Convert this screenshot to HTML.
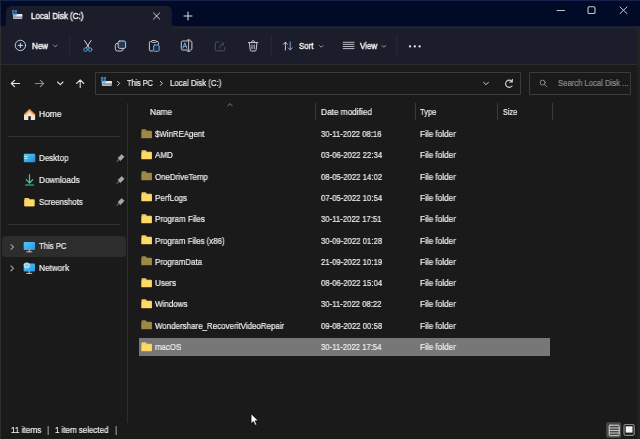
<!DOCTYPE html>
<html><head><meta charset="utf-8">
<style>
*{box-sizing:border-box;margin:0;padding:0}
html,body{width:640px;height:439px;overflow:hidden;background:#1a1a1a;font-family:"Liberation Sans",sans-serif;color:#fff}
.a{position:absolute}
.t{position:absolute;white-space:nowrap;transform-origin:0 0;will-change:transform;-webkit-text-stroke:0.2px currentColor;font-size:8.5px;line-height:12px;color:#f0f0f0}
svg{position:absolute;overflow:visible}
.fh{opacity:.58}
</style></head><body>
<svg width="0" height="0" style="position:absolute"><defs>
<symbol id="fold" viewBox="0 0 11 9" preserveAspectRatio="none"><path d="M0.5 1 Q0.5 0.3 1.2 0.3 H4.6 L5.8 1.6 H10 Q10.6 1.6 10.6 2.2 V8.2 Q10.6 8.8 10 8.8 H1.1 Q0.5 8.8 0.5 8.2 Z" fill="#f2cf63"/><path d="M0.5 2.4 H10.6 V8.2 Q10.6 8.8 10 8.8 H1.1 Q0.5 8.8 0.5 8.2 Z" fill="#ffd865"/></symbol>
<symbol id="drive" viewBox="0 0 10.6 8.9" preserveAspectRatio="none">
<rect x="1.1" y="4" width="9.5" height="4.9" rx="0.8" fill="#b6bac2"/>
<path d="M1.1 4.8 Q1.1 4 1.9 4 H9.8 Q10.6 4 10.6 4.8 V6.6 H1.1Z" fill="#e6eaf0"/>
<rect x="1.1" y="4" width="3.4" height="2.6" fill="#8ec0e6"/>
<rect x="1.6" y="6.6" width="8.6" height="0.7" fill="#5c626e"/>
<rect x="0" y="0" width="2.3" height="2.1" fill="#3d7fba"/><rect x="2.7" y="0" width="2.3" height="2.1" fill="#3d7fba"/>
<rect x="0" y="2.4" width="2.3" height="2.1" fill="#3d7fba"/><rect x="2.7" y="2.4" width="2.3" height="2.1" fill="#3d7fba"/>
</symbol>
</defs></svg>
<!-- title bar -->
<div class="a" style="left:0;top:0;width:640px;height:26px;background:#010a26"></div>
<div class="a" style="left:0;top:0;width:640px;height:1px;background:#17224a"></div>
<div class="a" style="left:0;top:0;width:1px;height:26px;background:#1a2238"></div>
<div class="a" style="left:5.5px;top:6px;width:166px;height:21px;background:#1b1e2a;border-radius:6px 6px 0 0"></div>
<!-- toolbar -->
<div class="a" style="left:0;top:26px;width:640px;height:38px;background:#1b1e2a"></div>
<div class="a" style="left:172px;top:27px;width:468px;height:2px;background:#1f2231"></div>
<div class="a" style="left:0;top:64px;width:640px;height:1px;background:#2b2d33"></div>
<!-- nav -->
<div class="a" style="left:95px;top:72px;width:426px;height:23px;border:1px solid #3b3b3b;border-radius:1px"></div>
<div class="a" style="left:529px;top:72px;width:102px;height:23px;border:1px solid #3b3b3b;border-radius:1px"></div>
<!-- sidebar -->
<div class="a" style="left:127px;top:103px;width:1px;height:320px;background:#2e2e2e"></div>
<div class="a" style="left:8px;top:136px;width:112px;height:1px;background:#333"></div>
<div class="a" style="left:8px;top:224px;width:112px;height:1px;background:#333"></div>
<div class="a" style="left:2px;top:236px;width:124px;height:21px;background:#2d2d2d;border-radius:3px"></div>
<!-- header separators -->
<div class="a" style="left:315px;top:103px;width:1px;height:17px;background:#3a3a3a"></div>
<div class="a" style="left:415px;top:103px;width:1px;height:17px;background:#3a3a3a"></div>
<div class="a" style="left:497px;top:103px;width:1px;height:17px;background:#3a3a3a"></div>
<div class="a" style="left:552px;top:103px;width:1px;height:17px;background:#3a3a3a"></div>
<div class="a" style="left:0;top:26px;width:1px;height:413px;background:#2e2e2e"></div>
<div class="a" style="left:637px;top:26px;width:3px;height:413px;background:#222"></div>
<!-- selection -->
<div class="a" style="left:139px;top:338px;width:411px;height:18px;background:#777"></div>
<svg class="a" style="left:0;top:0" width="640" height="439" viewBox="0 0 640 439">
<g fill="none" stroke-linecap="round" stroke-linejoin="round">
<use href="#drive" x="11.9" y="10.1" width="10.6" height="8.9"/>
<rect x="171.5" y="21.5" width="4.5" height="5" fill="#1b1e2a" stroke="none"/>
<path d="M171.5 18 V22.5 A3.5 3.5 0 0 0 175 26 H176.5 V18 Z" fill="#010a26" stroke="none"/>
<!-- tab close -->
<path d="M153.6 13 L159.6 19 M159.6 13 L153.6 19" stroke="#d8d8d8" stroke-width="1"/>
<!-- plus -->
<path d="M188 12 V20 M184 16 H192" stroke="#e0e0e0" stroke-width="1"/>
<!-- window controls -->
<path d="M557 10.5 H564.5" stroke="#c8c8c8" stroke-width="1"/>
<rect x="588" y="6.7" width="7" height="6.8" rx="1.3" stroke="#c8c8c8" stroke-width="1.1"/>
<path d="M620 7 L627 13.5 M627 7 L620 13.5" stroke="#c8c8c8" stroke-width="1"/>
<!-- toolbar: new -->
<circle cx="20.4" cy="45.4" r="5.2" fill="#17243a" stroke="#c8ccd4" stroke-width="1"/>
<path d="M20.4 43.3 V47.5 M18.3 45.4 H22.5" stroke="#d8dbe2" stroke-width="1"/>
<path d="M53.5 45 L55.3 46.8 L57.1 45" stroke="#a0a4ac" stroke-width="0.9"/>
<!-- separators -->
<path d="M69.7 36 V55 M271.3 35 V56 M396.7 35 V56" stroke="#282b36" stroke-width="1"/>
<!-- scissors -->
<path d="M84.6 40.5 L89.4 48.1 M91 40.5 L86.3 48.1" stroke="#d0d4da" stroke-width="1"/>
<circle cx="85.6" cy="49.6" r="1.8" stroke="#5aa8e0" stroke-width="0.9"/>
<circle cx="90.2" cy="49.6" r="1.8" stroke="#5aa8e0" stroke-width="0.9"/>
<!-- copy -->
<rect x="118.2" y="41" width="7.4" height="7.4" rx="1.5" fill="#22395a" stroke="#c8ccd4" stroke-width="1"/>
<path d="M117.6 43.2 Q115.3 43.2 115.3 45.5 V48.8 Q115.3 51 117.6 51 H121 Q123.3 51 123.3 48.8" stroke="#c8ccd4" stroke-width="1"/>
<!-- paste -->
<path d="M151.5 41.5 H150.5 Q149.4 41.5 149.4 42.7 V49.8 Q149.4 51 150.6 51 H152.8 M156.3 41.5 H157.2 Q158.4 41.5 158.4 42.7 V44.5" stroke="#c8ccd4" stroke-width="1"/>
<rect x="151.6" y="40.5" width="4.7" height="2" rx="0.8" stroke="#c8ccd4" stroke-width="0.9"/>
<rect x="153.6" y="45" width="5.6" height="6.3" rx="1" fill="#1e3048" stroke="#6aaae0" stroke-width="1"/>
<!-- rename -->
<path d="M187.2 41 H182.6 Q181.3 41 181.3 42.3 V48.7 Q181.3 50 182.6 50 H187.2 M190 41 H190.6 Q191.9 41 191.9 42.3 V48.7 Q191.9 50 190.6 50 H190" stroke="#c8ccd4" stroke-width="1"/>
<path d="M188.6 40 V51.2 M187.3 40 H190 M187.3 51.2 H190" stroke="#c8ccd4" stroke-width="0.9"/>
<path d="M182.9 48.2 L184.9 42.8 L186.9 48.2 M183.7 46.4 H186.1" stroke="#6bb0e8" stroke-width="1"/>
<!-- share (disabled) -->
<path d="M219 42 H216.5 Q215.3 42 215.3 43.2 V49.6 Q215.3 50.8 216.5 50.8 H223.5 Q224.7 50.8 224.7 49.6 V47.5" stroke="#4a505c" stroke-width="1"/>
<path d="M219.5 48 Q219.5 44 223.5 44 M221.8 42 L224 44 L221.8 46" stroke="#3a4d66" stroke-width="1"/>
<!-- trash -->
<path d="M248.4 42.6 H257.8 M251.4 42.4 Q251.6 40.6 253.1 40.6 Q254.6 40.6 254.8 42.4 M249.4 43 L250.2 50 Q250.3 51 251.3 51 H255 Q256 51 256.1 50 L256.9 43 M252 45 V48.6 M254.2 45 V48.6" stroke="#c8ccd4" stroke-width="1"/>
<!-- sort -->
<path d="M285.4 50 V42.3 M283.4 44.3 L285.4 42.2 L287.4 44.3" stroke="#d8dbe2" stroke-width="0.9"/>
<path d="M290.2 42 V49.8 M288.2 47.8 L290.2 49.9 L292.2 47.8" stroke="#8cb8dc" stroke-width="0.9"/>
<path d="M319.5 45.5 L321.3 47.3 L323.1 45.5" stroke="#a0a4ac" stroke-width="0.9"/>
<!-- view -->
<path d="M343.2 42.3 H354 M343.2 44.4 H354 M343.2 46.5 H354 M343.2 48.6 H354" stroke="#c8ccd4" stroke-width="0.9"/>
<path d="M382 45.5 L383.8 47.3 L385.6 45.5" stroke="#a0a4ac" stroke-width="0.9"/>
<!-- more -->
<circle cx="410" cy="46.4" r="1.15" fill="#eeeeee"/><circle cx="414.8" cy="46.4" r="1.15" fill="#eeeeee"/><circle cx="419.6" cy="46.4" r="1.15" fill="#eeeeee"/>
<!-- nav arrows -->
<path d="M19.5 83.5 H11.3 M14.6 80.3 L11.3 83.5 L14.6 86.7" stroke="#e8e8e8" stroke-width="1.1"/>
<path d="M35.4 83.5 H43.6 M40.3 80.3 L43.6 83.5 L40.3 86.7" stroke="#8a8a8a" stroke-width="1.1"/>
<path d="M57.6 82 L60.3 84.7 L63 82" stroke="#e0e0e0" stroke-width="1.1"/>
<path d="M80.2 87.5 V80 M76.6 83.5 L80.2 79.9 L83.8 83.5" stroke="#e0e0e0" stroke-width="1.1"/>
<use href="#drive" x="100.7" y="76.8" width="11.2" height="9.2"/>
<path d="M117.6 81.4 L119.6 83.4 L117.6 85.4 M160.4 81.4 L162.4 83.4 L160.4 85.4" stroke="#d8d8d8" stroke-width="1"/>
<path d="M483.6 82.3 L486 84.7 L488.4 82.3" stroke="#d0d0d0" stroke-width="1"/>
<path d="M512 81.5 A3.6 3.6 0 1 0 512 86 M512.3 79.3 V82 H509.6" stroke="#d8d8d8" stroke-width="1.1"/>
<circle cx="542.6" cy="82.6" r="2.5" stroke="#8a8a8a" stroke-width="1"/>
<path d="M544.4 84.4 L546.6 86.6" stroke="#8a8a8a" stroke-width="1"/>
<!-- header caret -->
<path d="M227.8 105.8 L230 103.6 L232.2 105.8" stroke="#8a8a8a" stroke-width="0.9"/>
<!-- sidebar icons -->
<defs>
<linearGradient id="gdesk" x1="0" y1="0" x2="1" y2="1"><stop offset="0" stop-color="#4fd0f4"/><stop offset="1" stop-color="#2a86dc"/></linearGradient>
<linearGradient id="gmon" x1="0" y1="0" x2="1" y2="1"><stop offset="0" stop-color="#52c8f2"/><stop offset="1" stop-color="#2e96e0"/></linearGradient>
<linearGradient id="groof" x1="0" y1="0" x2="0" y2="1"><stop offset="0" stop-color="#e08a3c"/><stop offset="1" stop-color="#f3c89c"/></linearGradient>
</defs>
<path d="M29.5 109 L24 114.3 V119.5 Q24 120 24.5 120 H28.3 V116.3 H30.8 V120 H34.6 Q35.1 120 35.1 119.5 V114.3 Z" fill="#efe4da" stroke="none"/>
<path d="M29.5 109 L23.8 114.6 L25 115 L29.5 110.6 L34 115 L35.2 114.6 Z" fill="#dc7f30" stroke="none"/>
<path d="M29.5 110.6 L25 115 V116 L29.5 111.8 L34 116 V115Z" fill="#f0b47a" stroke="none"/>
<rect x="23.8" y="153.8" width="11.5" height="8.4" rx="1" fill="url(#gdesk)" stroke="none"/>
<path d="M25 156.5 H27 M25 158.5 H27" stroke="#c8f4ff" stroke-width="0.9"/>
<path d="M29.5 174.6 V182.6 M26.2 179.6 L29.5 183 L32.8 179.6 M25.6 185 H33.6" stroke="#3ec9a2" stroke-width="1.2"/>
<g transform="translate(23.8 197.6)"><svg width="11.2" height="9" viewBox="0 0 11 9" style="position:static"><use href="#fold"/></svg></g>
<path d="M117 161.5 L119 159.5" stroke="#9a9a9a" stroke-width="0.9"/>
<path d="M118.2 158 L121.8 154.6 L124 156.8 L120.6 160.4 Z" fill="#a8a8a8" stroke="#a8a8a8" stroke-width="0.8"/>
<path d="M117 183.5 L119 181.5" stroke="#9a9a9a" stroke-width="0.9"/>
<path d="M118.2 180 L121.8 176.6 L124 178.8 L120.6 182.4 Z" fill="#a8a8a8" stroke="#a8a8a8" stroke-width="0.8"/>
<path d="M117 205.5 L119 203.5" stroke="#9a9a9a" stroke-width="0.9"/>
<path d="M118.2 202 L121.8 198.6 L124 200.8 L120.6 204.4 Z" fill="#a8a8a8" stroke="#a8a8a8" stroke-width="0.8"/>
<path d="M11 244.6 L13.5 247 L11 249.4 M11 266 L13.5 268.4 L11 270.8" stroke="#959595" stroke-width="1.25"/>
<rect x="23.7" y="241.9" width="11.3" height="8" rx="0.8" fill="url(#gmon)" stroke="none"/>
<path d="M29.3 249.9 V251.3 M26.8 251.8 H31.8" stroke="#d8d8d8" stroke-width="0.9"/>
<rect x="23.7" y="263.5" width="11.3" height="8" rx="0.8" fill="url(#gmon)" stroke="none"/>
<circle cx="26.8" cy="265.4" r="3" fill="#b4e4f6" stroke="none"/>
<path d="M25 265.4 H28.6 M26.8 263 V267.8" stroke="#58b8e4" stroke-width="0.6"/>
<path d="M29.3 271.5 V272.9 M26.8 273.4 H31.8" stroke="#d8d8d8" stroke-width="0.9"/>
<!-- status view buttons -->
<rect x="606.2" y="422.3" width="15" height="15.5" rx="1.5" fill="#4a4a4a" stroke="none"/>
<rect x="609.2" y="425.2" width="10" height="10.5" rx="1" fill="none" stroke="#d8d8d8" stroke-width="1"/>
<path d="M609.5 428 H619 M609.5 430.5 H619 M609.5 433 H619" stroke="#d8d8d8" stroke-width="0.9"/>
<rect x="624" y="424.5" width="10.2" height="10.8" rx="1.5" fill="none" stroke="#8a8a8a" stroke-width="1.2"/>
<rect x="625.7" y="426.3" width="6.8" height="6.3" fill="#f4f4f4" stroke="none"/>
<!-- cursor -->
<path d="M251.1 413.9 V423.6 L253.4 421.4 L255.2 425.2 L256.8 424.5 L255 420.8 H258.1 Z" fill="#ffffff" stroke="#000" stroke-width="0.6" stroke-linejoin="miter"/>
</g>
</svg>
<svg class="fh" style="left:141px;top:128.5px" width="11.2" height="9.5"><use href="#fold"/></svg>
<svg class="fn" style="left:141px;top:149.8px" width="11.2" height="9.5"><use href="#fold"/></svg>
<svg class="fh" style="left:141px;top:171.1px" width="11.2" height="9.5"><use href="#fold"/></svg>
<svg class="fn" style="left:141px;top:192.4px" width="11.2" height="9.5"><use href="#fold"/></svg>
<svg class="fn" style="left:141px;top:213.7px" width="11.2" height="9.5"><use href="#fold"/></svg>
<svg class="fn" style="left:141px;top:235.0px" width="11.2" height="9.5"><use href="#fold"/></svg>
<svg class="fh" style="left:141px;top:256.3px" width="11.2" height="9.5"><use href="#fold"/></svg>
<svg class="fn" style="left:141px;top:277.6px" width="11.2" height="9.5"><use href="#fold"/></svg>
<svg class="fn" style="left:141px;top:298.9px" width="11.2" height="9.5"><use href="#fold"/></svg>
<svg class="fh" style="left:141px;top:320.2px" width="11.2" height="9.5"><use href="#fold"/></svg>
<svg class="fn" style="left:141px;top:341.5px" width="11.2" height="9.5"><use href="#fold"/></svg>
<div class="t" style="left:31.00px;top:9.90px;transform:scaleX(0.9392);color:#f2f2f2;-webkit-text-stroke:0.45px currentColor;">Local Disk (C:)</div>
<div class="t" style="left:31.70px;top:40.40px;transform:scaleX(0.9459);color:#f0f0f0;-webkit-text-stroke:0.45px currentColor;">New</div>
<div class="t" style="left:299.00px;top:40.30px;transform:scaleX(0.9244);color:#f0f0f0;-webkit-text-stroke:0.45px currentColor;">Sort</div>
<div class="t" style="left:359.70px;top:40.30px;transform:scaleX(0.9304);color:#f0f0f0;-webkit-text-stroke:0.45px currentColor;">View</div>
<div class="t" style="left:127.30px;top:77.10px;transform:scaleX(0.8541);color:#f0f0f0;">This PC</div>
<div class="t" style="left:169.60px;top:77.10px;transform:scaleX(0.9195);color:#f0f0f0;">Local Disk (C:)</div>
<div class="t" style="left:557.80px;top:76.90px;transform:scaleX(0.9048);color:#8e8e8e;">Search Local Disk ...</div>
<div class="t" style="left:38.60px;top:108.00px;transform:scaleX(0.9936);color:#f0f0f0;">Home</div>
<div class="t" style="left:38.50px;top:152.00px;transform:scaleX(0.9474);color:#f0f0f0;">Desktop</div>
<div class="t" style="left:38.50px;top:174.00px;transform:scaleX(0.9689);color:#f0f0f0;">Downloads</div>
<div class="t" style="left:38.50px;top:196.00px;transform:scaleX(0.9256);color:#f0f0f0;">Screenshots</div>
<div class="t" style="left:38.60px;top:240.00px;transform:scaleX(0.9106);color:#f0f0f0;">This PC</div>
<div class="t" style="left:38.60px;top:262.00px;transform:scaleX(0.9679);color:#f0f0f0;">Network</div>
<div class="t" style="left:149.50px;top:106.20px;transform:scaleX(0.9697);color:#f0f0f0;">Name</div>
<div class="t" style="left:320.70px;top:106.20px;transform:scaleX(0.9731);color:#f0f0f0;">Date modified</div>
<div class="t" style="left:419.50px;top:106.20px;transform:scaleX(0.8823);color:#f0f0f0;">Type</div>
<div class="t" style="left:502.50px;top:106.20px;transform:scaleX(0.8627);color:#f0f0f0;">Size</div>
<div class="t" style="left:155.00px;top:128.00px;transform:scaleX(0.9254);color:#f0f0f0;">$WinREAgent</div>
<div class="t" style="left:320.50px;top:128.00px;transform:scaleX(0.9101);color:#f0f0f0;">30-11-2022 08:16</div>
<div class="t" style="left:419.50px;top:128.00px;transform:scaleX(0.9602);color:#f0f0f0;">File folder</div>
<div class="t" style="left:155.00px;top:149.30px;transform:scaleX(0.9434);color:#f0f0f0;">AMD</div>
<div class="t" style="left:320.50px;top:149.30px;transform:scaleX(0.9101);color:#f0f0f0;">03-06-2022 22:34</div>
<div class="t" style="left:419.50px;top:149.30px;transform:scaleX(0.9602);color:#f0f0f0;">File folder</div>
<div class="t" style="left:155.00px;top:170.60px;transform:scaleX(0.9320);color:#f0f0f0;">OneDriveTemp</div>
<div class="t" style="left:320.50px;top:170.60px;transform:scaleX(0.9101);color:#f0f0f0;">08-05-2022 14:02</div>
<div class="t" style="left:419.50px;top:170.60px;transform:scaleX(0.9602);color:#f0f0f0;">File folder</div>
<div class="t" style="left:155.00px;top:191.90px;transform:scaleX(0.9434);color:#f0f0f0;">PerfLogs</div>
<div class="t" style="left:320.50px;top:191.90px;transform:scaleX(0.9101);color:#f0f0f0;">07-05-2022 10:54</div>
<div class="t" style="left:419.50px;top:191.90px;transform:scaleX(0.9602);color:#f0f0f0;">File folder</div>
<div class="t" style="left:155.00px;top:213.20px;transform:scaleX(0.9410);color:#f0f0f0;">Program Files</div>
<div class="t" style="left:320.50px;top:213.20px;transform:scaleX(0.9101);color:#f0f0f0;">30-11-2022 17:51</div>
<div class="t" style="left:419.50px;top:213.20px;transform:scaleX(0.9602);color:#f0f0f0;">File folder</div>
<div class="t" style="left:155.00px;top:234.50px;transform:scaleX(0.9344);color:#f0f0f0;">Program Files (x86)</div>
<div class="t" style="left:320.50px;top:234.50px;transform:scaleX(0.9101);color:#f0f0f0;">30-09-2022 01:28</div>
<div class="t" style="left:419.50px;top:234.50px;transform:scaleX(0.9602);color:#f0f0f0;">File folder</div>
<div class="t" style="left:155.00px;top:255.80px;transform:scaleX(0.9315);color:#f0f0f0;">ProgramData</div>
<div class="t" style="left:320.50px;top:255.80px;transform:scaleX(0.9101);color:#f0f0f0;">21-09-2022 10:19</div>
<div class="t" style="left:419.50px;top:255.80px;transform:scaleX(0.9602);color:#f0f0f0;">File folder</div>
<div class="t" style="left:155.00px;top:277.10px;transform:scaleX(0.9472);color:#f0f0f0;">Users</div>
<div class="t" style="left:320.50px;top:277.10px;transform:scaleX(0.9101);color:#f0f0f0;">08-06-2022 15:04</div>
<div class="t" style="left:419.50px;top:277.10px;transform:scaleX(0.9602);color:#f0f0f0;">File folder</div>
<div class="t" style="left:155.00px;top:298.40px;transform:scaleX(0.9434);color:#f0f0f0;">Windows</div>
<div class="t" style="left:320.50px;top:298.40px;transform:scaleX(0.9101);color:#f0f0f0;">30-11-2022 08:22</div>
<div class="t" style="left:419.50px;top:298.40px;transform:scaleX(0.9602);color:#f0f0f0;">File folder</div>
<div class="t" style="left:155.00px;top:319.70px;transform:scaleX(0.9354);color:#f0f0f0;">Wondershare_RecoveritVideoRepair</div>
<div class="t" style="left:320.50px;top:319.70px;transform:scaleX(0.9101);color:#f0f0f0;">09-08-2022 00:58</div>
<div class="t" style="left:419.50px;top:319.70px;transform:scaleX(0.9602);color:#f0f0f0;">File folder</div>
<div class="t" style="left:155.00px;top:341.00px;transform:scaleX(0.9257);color:#f0f0f0;">macOS</div>
<div class="t" style="left:320.50px;top:341.00px;transform:scaleX(0.9101);color:#f0f0f0;">30-11-2022 17:54</div>
<div class="t" style="left:419.50px;top:341.00px;transform:scaleX(0.9602);color:#f0f0f0;">File folder</div>
<div class="t" style="left:10.60px;top:424.00px;transform:scaleX(0.9602);color:#f0f0f0;">11 items</div>
<div class="t" style="left:46.60px;top:424.00px;letter-spacing:0.000px;color:#d0d0d0;-webkit-text-stroke:0;">|</div>
<div class="t" style="left:55.30px;top:424.00px;transform:scaleX(0.9349);color:#f0f0f0;">1 item selected</div>
<div class="t" style="left:115.40px;top:424.00px;letter-spacing:0.000px;color:#d0d0d0;-webkit-text-stroke:0;">|</div>
</body></html>
